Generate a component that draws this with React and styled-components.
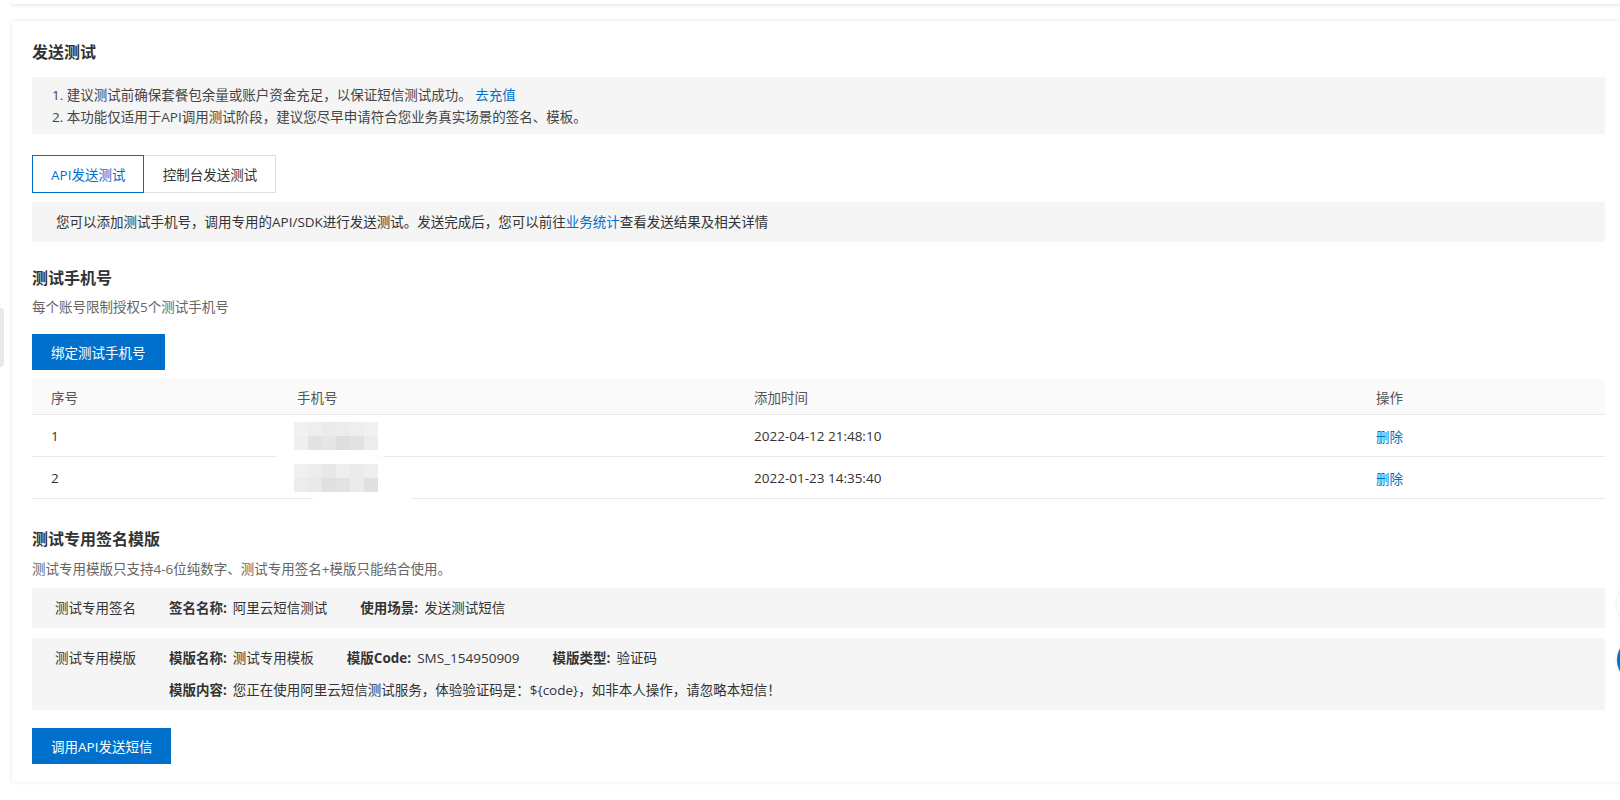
import React from "react";
import styled, { createGlobalStyle } from "styled-components";

const GlobalStyle = createGlobalStyle`
  html, body {
    margin: 0;
    padding: 0;
    background: #fff;
    overflow: hidden;
  }

  body {
    font-family: "Open Sans", "Noto Sans CJK SC", sans-serif;
    font-size: 13.5px;
    color: #333;
  }
`;

const Page = styled.div`
  display: flex;
  flex-direction: column;
  gap: 17px;
  padding-left: 12px;
  height: 800px;
`;

const PrevCard = styled.div`
  height: 4px;
  margin-right: -20px;
  background: #fff;
  box-shadow: 0 1px 4px rgba(0, 0, 0, 0.13);
`;

const Card = styled.section`
  display: flex;
  flex-direction: column;
  align-items: flex-start;
  margin-right: -20px;
  padding: 19px 35px 18px 20px;
  background: #fff;
  box-shadow: 0 0 4px rgba(0, 0, 0, 0.1);
`;

const Title = styled.h3`
  margin: ${(p) => p.$top || 0}px 0 0;
  font-size: 16px;
  font-weight: 700;
  line-height: 24px;
  color: #333;
`;

const Hint = styled.p`
  margin: ${(p) => p.$top || 0}px 0 0;
  line-height: 20px;
  color: #666;
`;

const Notice = styled.div`
  align-self: stretch;
  margin-top: 13px;
  padding: 7px 20px 6px;
  background: #f5f5f5;
  line-height: 22px;
  color: #444;
`;

const Link = styled.a`
  color: #0070cc;
  text-decoration: none;
  cursor: pointer;
`;

const Tabs = styled.div`
  display: flex;
  margin-top: 21px;
`;

const Tab = styled.div`
  box-sizing: border-box;
  height: 38px;
  padding: 0 18px;
  display: flex;
  align-items: center;
  justify-content: center;
  min-width: ${(p) => p.$w}px;
  border: 1px solid ${(p) => (p.$active ? "#0070cc" : "#dedede")};
  border-left-width: ${(p) => (p.$active ? 1 : 0)}px;
  color: ${(p) => (p.$active ? "#0070cc" : "#333")};
  cursor: pointer;
`;

const Desc = styled.div`
  align-self: stretch;
  margin-top: 9px;
  height: 40px;
  padding-left: 24px;
  background: #f5f5f5;
  line-height: 40px;
  color: #333;
`;

const Button = styled.button`
  margin-top: ${(p) => p.$top}px;
  height: 36px;
  padding: 0 19px;
  border: none;
  background: #0070cc;
  color: #fff;
  font: inherit;
  cursor: pointer;
`;

const Table = styled.div`
  align-self: stretch;
  margin-top: 9px;
  display: grid;
  grid-template-columns: 246px 457px 622px 1fr;
`;

const HeadCell = styled.div`
  height: 35px;
  padding-left: 19px;
  display: flex;
  align-items: center;
  background: #fafafa;
  border-bottom: 1px solid #e8e8e8;
  color: #555;
`;

const Cell = styled.div`
  position: relative;
  height: 41px;
  padding-left: 19px;
  display: flex;
  align-items: center;
  border-bottom: 1px solid #e8e8e8;
  color: #333;
`;

const Mosaic = styled.div`
  margin-left: -3px;
  display: grid;
  grid-template-columns: repeat(6, 14px);
  grid-auto-rows: 14px;
`;

const Pixel = styled.span`
  background: ${(p) => p.$c};
`;

const Smudge = styled.span`
  position: absolute;
  left: ${(p) => p.$left}px;
  bottom: -2px;
  width: ${(p) => p.$w}px;
  height: 6px;
  background: #fff;
  filter: blur(1.5px);
`;

const InfoBox = styled.div`
  align-self: stretch;
  margin-top: ${(p) => p.$top}px;
  display: flex;
  padding: 8px 0 8px 23px;
  background: #f5f5f5;
  line-height: 24px;
`;

const InfoLabel = styled.div`
  width: 114px;
  flex-shrink: 0;
  color: #333;
`;

const InfoLines = styled.div`
  display: flex;
  flex-direction: column;
  gap: 8px;
`;

const InfoLine = styled.div`
  display: flex;
  gap: 33px;
`;

const Field = styled.span`
  color: #333;

  b {
    font-weight: 700;
    margin-right: 6px;
  }
`;

const SideHandle = styled.div`
  position: fixed;
  left: 0;
  top: 308px;
  width: 4px;
  height: 59px;
  background: #e9e9e9;
  border-radius: 0 4px 4px 0;
`;

const FloatBtn = styled.div`
  position: fixed;
  left: 1617px;
  top: ${(p) => p.$top}px;
  width: 48px;
  height: 48px;
  border-radius: 50%;
  background: ${(p) => p.$bg};
  box-shadow: 0 0 3px rgba(0, 0, 0, 0.15);
`;

const mosaics = [
  [
    "#f1f1f1", "#eeeeee", "#ebebeb", "#ececec", "#eeeeee", "#f1f1f1",
    "#efefef", "#e2e2e2", "#e6e6e6", "#dedede", "#e2e2e2", "#ececec",
  ],
  [
    "#f0f0f0", "#ececec", "#e8e8e8", "#eeeeee", "#eaeaea", "#eeeeee",
    "#ececec", "#e9e9e9", "#e0e0e0", "#e3e3e3", "#ebebeb", "#e0e0e0",
  ],
];

const phones = [
  { id: 1, time: "2022-04-12 21:48:10", smudge: [-2, 108] },
  { id: 2, time: "2022-01-23 14:35:40", smudge: [34, 100] },
];

export default function App() {
  return (
    <>
      <GlobalStyle />
      <SideHandle />
      <FloatBtn $top={580} $bg="#fff" />
      <FloatBtn $top={636} $bg="#0070cc" />
      <Page>
        <PrevCard />
        <Card>
          <Title>发送测试</Title>
          <Notice>
            <div>
              1. 建议测试前确保套餐包余量或账户资金充足，以保证短信测试成功。{" "}
              <Link>去充值</Link>
            </div>
            <div>2. 本功能仅适用于API调用测试阶段，建议您尽早申请符合您业务真实场景的签名、模板。</div>
          </Notice>

          <Tabs>
            <Tab $active $w={112}>API发送测试</Tab>
            <Tab $w={132}>控制台发送测试</Tab>
          </Tabs>
          <Desc>
            您可以添加测试手机号，调用专用的API/SDK进行发送测试。发送完成后，您可以前往
            <Link>业务统计</Link>查看发送结果及相关详情
          </Desc>

          <Title $top={24}>测试手机号</Title>
          <Hint $top={7}>每个账号限制授权5个测试手机号</Hint>
          <Button $top={17}>绑定测试手机号</Button>

          <Table>
            <HeadCell>序号</HeadCell>
            <HeadCell>手机号</HeadCell>
            <HeadCell>添加时间</HeadCell>
            <HeadCell>操作</HeadCell>
            {phones.map((row, i) => (
              <React.Fragment key={row.id}>
                <Cell>{row.id}</Cell>
                <Cell>
                  <Mosaic>
                    {mosaics[i].map((c, k) => (
                      <Pixel key={k} $c={c} />
                    ))}
                  </Mosaic>
                  <Smudge $left={row.smudge[0]} $w={row.smudge[1]} />
                </Cell>
                <Cell>{row.time}</Cell>
                <Cell>
                  <Link>删除</Link>
                </Cell>
              </React.Fragment>
            ))}
          </Table>

          <Title $top={28}>测试专用签名模版</Title>
          <Hint $top={8}>测试专用模版只支持4-6位纯数字、测试专用签名+模版只能结合使用。</Hint>

          <InfoBox $top={9}>
            <InfoLabel>测试专用签名</InfoLabel>
            <InfoLines>
              <InfoLine>
                <Field><b>签名名称:</b>阿里云短信测试</Field>
                <Field><b>使用场景:</b>发送测试短信</Field>
              </InfoLine>
            </InfoLines>
          </InfoBox>
          <InfoBox $top={10}>
            <InfoLabel>测试专用模版</InfoLabel>
            <InfoLines>
              <InfoLine>
                <Field><b>模版名称:</b>测试专用模板</Field>
                <Field><b>模版Code:</b>SMS_154950909</Field>
                <Field><b>模版类型:</b>验证码</Field>
              </InfoLine>
              <InfoLine>
                <Field>
                  <b>模版内容:</b>您正在使用阿里云短信测试服务，体验验证码是：${"{code}"}，如非本人操作，请忽略本短信！
                </Field>
              </InfoLine>
            </InfoLines>
          </InfoBox>

          <Button $top={18}>调用API发送短信</Button>
        </Card>
      </Page>
    </>
  );
}
